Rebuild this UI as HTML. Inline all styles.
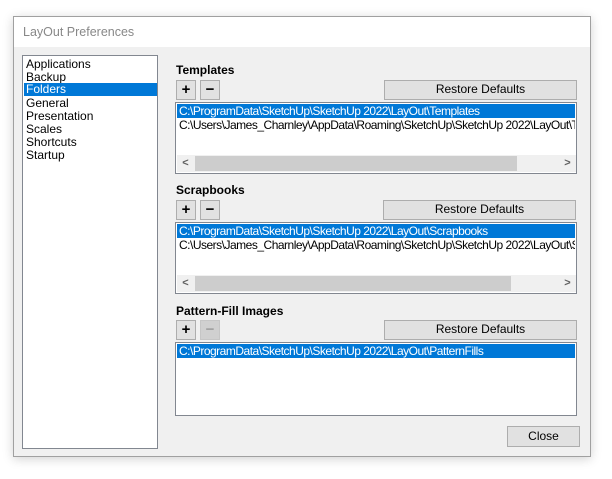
<!DOCTYPE html>
<html><head><style>
*{margin:0;padding:0;box-sizing:border-box}
body{width:612px;height:479px;background:#fff;font-family:"Liberation Sans",sans-serif;font-size:12px;color:#000;position:relative;overflow:hidden}
.a{position:absolute}
#win{left:13px;top:16px;width:578px;height:441px;border:1px solid #a0a0a0;background:#f0f0f0;box-shadow:0 2px 10px rgba(0,0,0,.18)}
#title{left:0;top:0;width:576px;height:30px;background:#fff;color:#888;font-size:12.5px;padding:8px 0 0 9px}
.box{background:#fff;border:1px solid #828790}
.it{position:absolute;left:3px;height:13px;line-height:13px;white-space:nowrap}
.lbl{font-weight:bold;font-size:12px}
.btn{background:#e1e1e1;border:1px solid #adadad;text-align:center;line-height:17px}
.pm{width:20px;height:20px;font-weight:bold;font-size:15px;line-height:17px}
.row{position:absolute;left:1px;width:398px;height:14px;line-height:14px;padding-left:2px;white-space:nowrap;overflow:hidden;letter-spacing:-0.5px}
.sel{background:#0078d7;color:#fff}
.sb{position:absolute;left:1px;bottom:1px;width:399px;height:17px;background:#f0f0f0}
.th{position:absolute;top:1px;height:15px;background:#cdcdcd}
.ar{position:absolute;top:0;width:17px;height:17px;color:#606060;text-align:center;line-height:17px;font-size:11px;font-weight:bold}
</style></head><body>
<div id="win" class="a">
<div id="title" class="a">LayOut Preferences</div>
</div>
<div class="a box" style="left:22px;top:55px;width:136px;height:394px">
<div class="it" style="top:2px">Applications</div>
<div class="it" style="top:15px">Backup</div>
<div class="it" style="top:27px;left:1px;width:133px;background:#0078d7;color:#fff;padding-left:2px">Folders</div>
<div class="it" style="top:41px">General</div>
<div class="it" style="top:54px">Presentation</div>
<div class="it" style="top:67px">Scales</div>
<div class="it" style="top:80px">Shortcuts</div>
<div class="it" style="top:93px">Startup</div>
</div>

<div class="a lbl" style="left:176px;top:63px">Templates</div>
<div class="a btn pm" style="left:176px;top:80px">+</div>
<div class="a btn pm" style="left:200px;top:80px">−</div>
<div class="a btn" style="left:384px;top:80px;width:193px;height:20px">Restore Defaults</div>
<div class="a box" style="left:175px;top:102px;width:402px;height:72px">
<div class="row sel" style="top:1px">C:\ProgramData\SketchUp\SketchUp 2022\LayOut\Templates</div>
<div class="row" style="top:15px">C:\Users\James_Charnley\AppData\Roaming\SketchUp\SketchUp 2022\LayOut\Templates</div>
<div class="sb"><div class="ar" style="left:0">&lt;</div><div class="th" style="left:18px;width:322px"></div><div class="ar" style="right:0">&gt;</div></div>
</div>

<div class="a lbl" style="left:176px;top:183px">Scrapbooks</div>
<div class="a btn pm" style="left:176px;top:200px">+</div>
<div class="a btn pm" style="left:200px;top:200px">−</div>
<div class="a btn" style="left:383px;top:200px;width:193px;height:20px">Restore Defaults</div>
<div class="a box" style="left:175px;top:222px;width:402px;height:72px">
<div class="row sel" style="top:1px">C:\ProgramData\SketchUp\SketchUp 2022\LayOut\Scrapbooks</div>
<div class="row" style="top:15px">C:\Users\James_Charnley\AppData\Roaming\SketchUp\SketchUp 2022\LayOut\Scrapbooks</div>
<div class="sb"><div class="ar" style="left:0">&lt;</div><div class="th" style="left:18px;width:316px"></div><div class="ar" style="right:0">&gt;</div></div>
</div>

<div class="a lbl" style="left:176px;top:304px">Pattern-Fill Images</div>
<div class="a btn pm" style="left:176px;top:320px">+</div>
<div class="a btn pm" style="left:200px;top:320px;background:#d0d0d0;border-color:#c6c6c6;color:#a0a0a0">−</div>
<div class="a btn" style="left:384px;top:320px;width:193px;height:20px">Restore Defaults</div>
<div class="a box" style="left:175px;top:342px;width:402px;height:74px">
<div class="row sel" style="top:1px">C:\ProgramData\SketchUp\SketchUp 2022\LayOut\PatternFills</div>
</div>

<div class="a btn" style="left:507px;top:426px;width:73px;height:21px;line-height:19px">Close</div>
</body></html>
